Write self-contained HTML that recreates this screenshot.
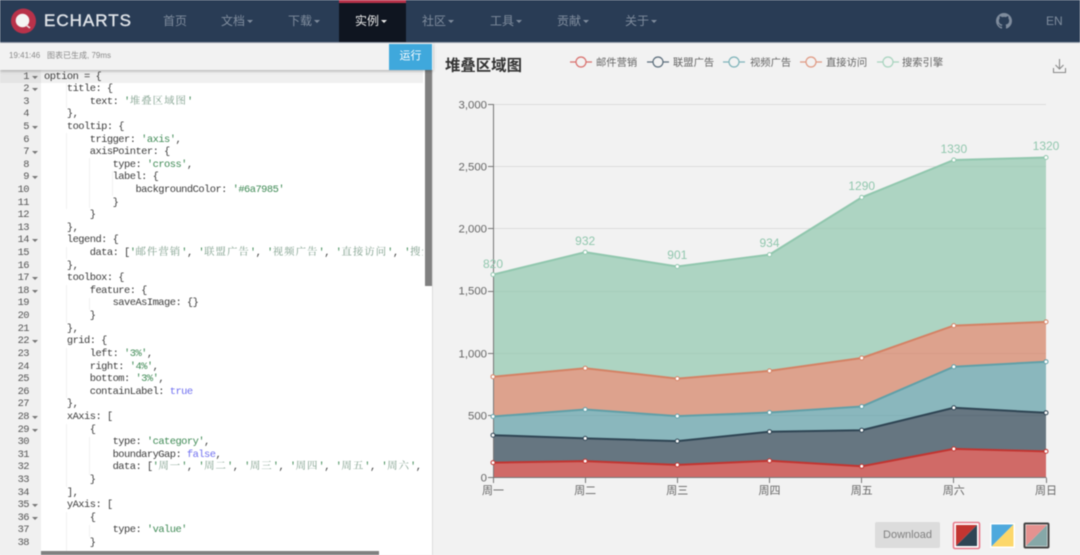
<!DOCTYPE html>
<html lang="zh"><head><meta charset="utf-8"><title>ECharts</title>
<style>
html,body{margin:0;padding:0;width:1080px;height:555px;overflow:hidden;background:#f2f2f2}
#r{position:relative;width:1080px;height:555px;overflow:hidden;filter:blur(.5px);font-family:"Liberation Sans","Noto Sans CJK SC",sans-serif}
#nav{position:absolute;left:0;top:0;width:1080px;height:42px;background:#293c55;border-bottom:1px solid #9aa3b0}
#nav span.n{position:absolute;top:13px;font-size:12px;line-height:16px;color:#7f8c9d;white-space:nowrap}
#nav span.n u{display:inline-block;width:0;height:0;border-left:3.5px solid transparent;border-right:3.5px solid transparent;border-top:3.5px solid currentColor;vertical-align:2px;margin-left:2px}
#act{position:absolute;left:339px;top:0;width:67px;height:42px;background:#0f1520}
#act:before{content:"";position:absolute;left:0;top:0;width:67px;height:3px;background:#b8324a}
#lg{position:absolute;left:44px;top:12px;font-size:17px;line-height:18px;font-weight:normal;color:#dfe3e8;letter-spacing:1px;-webkit-text-stroke:.4px #dfe3e8}
#bar{position:absolute;left:0;top:43px;width:433px;height:27px;background:#f2f2f2;box-shadow:0 1px 3px rgba(0,0,0,.3);z-index:3}
#bar span{position:absolute;top:7px;font-size:8px;line-height:12px;color:#8a8a8a;white-space:nowrap}
#run{position:absolute;left:389px;top:1px;width:43px;height:26px;background:#3fa8dc;color:#fff;font-size:11px;line-height:24px;text-align:center}
#ed{position:absolute;left:0;top:70px;width:432px;height:485px;background:#fff;overflow:hidden}
#gut{position:absolute;left:0;top:0;width:41px;height:485px;background:#f0f0f0}
#act1{position:absolute;left:0;top:0;width:41px;height:12.6px;background:#e4e4e4}
#act2{position:absolute;left:41px;top:0;width:382px;height:12.6px;background:#f0f0f0}
#code{position:absolute;left:0;top:0;width:423px;height:485px;overflow:hidden;padding-top:.5px;font-family:"Liberation Mono","Noto Serif CJK SC",monospace;font-size:10.4px;letter-spacing:-.52px;color:#3c3c3c}
.l{position:relative;height:12.62px;line-height:12.62px;white-space:pre;padding-left:44px}
.l b{position:absolute;left:0;width:29px;text-align:right;font-weight:normal;color:#555}
.l i{position:absolute;left:32px;top:5px;width:0;height:0;border-left:3px solid transparent;border-right:3px solid transparent;border-top:3px solid #777}
.s{color:#3f8a55}
.k{color:#6f6ff0}
.c{font-family:"Noto Serif CJK SC","Liberation Mono",serif;letter-spacing:1.05px;color:#7f9f8c;line-height:0}
.g{position:absolute;width:1px;background:#f2f2f2}
#vs{position:absolute;left:425px;top:0;width:7px;height:216px;background:#808080}
#hs{position:absolute;left:41px;top:481px;width:338px;height:4px;background:#808080}
#div{position:absolute;left:432px;top:43px;width:1px;height:512px;background:#dcdcdc}
#dl{position:absolute;left:875px;top:522px;width:65px;height:26px;background:#dcdcdc;border-radius:2px;color:#808080;font-size:11px;line-height:26px;text-align:center}
</style></head><body><div id="r">
<div id="nav">
<svg style="position:absolute;left:11px;top:8px" width="26" height="26" viewBox="0 0 26 26"><circle cx="12.5" cy="13" r="12.5" fill="#b8324a"/><circle cx="11.5" cy="12.5" r="6.8" fill="#f4f4f4"/><path d="M15 17l4 3" stroke="#e8d8dc" stroke-width="1.6" fill="none"/></svg>
<div id="lg">ECHARTS</div>
<div id="act"></div>
<span class="n" style="left:163px">首页</span>
<span class="n" style="left:221px">文档<u></u></span>
<span class="n" style="left:288px">下载<u></u></span>
<span class="n" style="left:355px;color:#e8e8e8">实例<u></u></span>
<span class="n" style="left:422px">社区<u></u></span>
<span class="n" style="left:490px">工具<u></u></span>
<span class="n" style="left:557px">贡献<u></u></span>
<span class="n" style="left:625px">关于<u></u></span>
<svg style="position:absolute;left:996px;top:13px" width="16" height="16" viewBox="0 0 16 16"><path fill="#7f8c9d" d="M8 0C3.58 0 0 3.58 0 8c0 3.54 2.29 6.53 5.47 7.59.4.07.55-.17.55-.38 0-.19-.01-.82-.01-1.49-2.01.37-2.53-.49-2.69-.94-.09-.23-.48-.94-.82-1.13-.28-.15-.68-.52-.01-.53.63-.01 1.08.58 1.23.82.72 1.21 1.87.87 2.33.66.07-.52.28-.87.51-1.07-1.78-.2-3.64-.89-3.64-3.95 0-.87.31-1.59.82-2.15-.08-.2-.36-1.02.08-2.12 0 0 .67-.21 2.2.82.64-.18 1.32-.27 2-.27s1.36.09 2 .27c1.53-1.04 2.2-.82 2.2-.82.44 1.1.16 1.92.08 2.12.51.56.82 1.27.82 2.15 0 3.07-1.87 3.75-3.65 3.95.29.25.54.73.54 1.48 0 1.07-.01 1.93-.01 2.2 0 .21.15.46.55.38A8.01 8.01 0 0016 8c0-4.42-3.58-8-8-8z"/></svg>
<span class="n" style="left:1046px;font-size:12px">EN</span>
</div>

<div id="bar"><span style="left:9px">19:41:46</span><span style="left:47px">图表已生成, 79ms</span><div id="run">运行</div></div>

<div id="ed">
<div id="gut"></div><div id="act1"></div><div id="act2"></div>
<div class="g" style="left:66px;top:13px;height:25px"></div>
<div class="g" style="left:66px;top:63px;height:76px"></div>
<div class="g" style="left:89px;top:88px;height:50px"></div>
<div class="g" style="left:112px;top:101px;height:25px"></div>
<div class="g" style="left:66px;top:177px;height:12px"></div>
<div class="g" style="left:66px;top:215px;height:38px"></div>
<div class="g" style="left:89px;top:228px;height:12px"></div>
<div class="g" style="left:66px;top:278px;height:50px"></div>
<div class="g" style="left:66px;top:354px;height:63px"></div>
<div class="g" style="left:89px;top:367px;height:38px"></div>
<div class="g" style="left:66px;top:442px;height:40px"></div>
<div class="g" style="left:89px;top:455px;height:12px"></div>
<div id="code">
<div class="l"><b>1</b><i></i>option = {</div>
<div class="l"><b>2</b><i></i>    title: {</div>
<div class="l"><b>3</b>        text: <span class="s">'</span><span class="c">堆叠区域图</span><span class="s">'</span></div>
<div class="l"><b>4</b>    },</div>
<div class="l"><b>5</b><i></i>    tooltip: {</div>
<div class="l"><b>6</b>        trigger: <span class="s">'axis'</span>,</div>
<div class="l"><b>7</b><i></i>        axisPointer: {</div>
<div class="l"><b>8</b>            type: <span class="s">'cross'</span>,</div>
<div class="l"><b>9</b><i></i>            label: {</div>
<div class="l"><b>10</b>                backgroundColor: <span class="s">'#6a7985'</span></div>
<div class="l"><b>11</b>            }</div>
<div class="l"><b>12</b>        }</div>
<div class="l"><b>13</b>    },</div>
<div class="l"><b>14</b><i></i>    legend: {</div>
<div class="l"><b>15</b>        data: [<span class="s">'</span><span class="c">邮件营销</span><span class="s">'</span>, <span class="s">'</span><span class="c">联盟广告</span><span class="s">'</span>, <span class="s">'</span><span class="c">视频广告</span><span class="s">'</span>, <span class="s">'</span><span class="c">直接访问</span><span class="s">'</span>, <span class="s">'</span><span class="c">搜索引擎</span><span class="s">'</span>]</div>
<div class="l"><b>16</b>    },</div>
<div class="l"><b>17</b><i></i>    toolbox: {</div>
<div class="l"><b>18</b><i></i>        feature: {</div>
<div class="l"><b>19</b>            saveAsImage: {}</div>
<div class="l"><b>20</b>        }</div>
<div class="l"><b>21</b>    },</div>
<div class="l"><b>22</b><i></i>    grid: {</div>
<div class="l"><b>23</b>        left: <span class="s">'3%'</span>,</div>
<div class="l"><b>24</b>        right: <span class="s">'4%'</span>,</div>
<div class="l"><b>25</b>        bottom: <span class="s">'3%'</span>,</div>
<div class="l"><b>26</b>        containLabel: <span class="k">true</span></div>
<div class="l"><b>27</b>    },</div>
<div class="l"><b>28</b><i></i>    xAxis: [</div>
<div class="l"><b>29</b><i></i>        {</div>
<div class="l"><b>30</b>            type: <span class="s">'category'</span>,</div>
<div class="l"><b>31</b>            boundaryGap: <span class="k">false</span>,</div>
<div class="l"><b>32</b>            data: [<span class="s">'</span><span class="c">周一</span><span class="s">'</span>, <span class="s">'</span><span class="c">周二</span><span class="s">'</span>, <span class="s">'</span><span class="c">周三</span><span class="s">'</span>, <span class="s">'</span><span class="c">周四</span><span class="s">'</span>, <span class="s">'</span><span class="c">周五</span><span class="s">'</span>, <span class="s">'</span><span class="c">周六</span><span class="s">'</span>,</div>
<div class="l"><b>33</b>        }</div>
<div class="l"><b>34</b>    ],</div>
<div class="l"><b>35</b><i></i>    yAxis: [</div>
<div class="l"><b>36</b><i></i>        {</div>
<div class="l"><b>37</b>            type: <span class="s">'value'</span></div>
<div class="l"><b>38</b>        }</div>
</div>
<div id="vs"></div><div id="hs"></div>
</div>
<div id="div"></div>

<svg style="position:absolute;left:0;top:0" width="1080" height="555" viewBox="0 0 1080 555" font-family="'Liberation Sans','Noto Sans CJK SC',sans-serif">
<rect x="433" y="43" width="647" height="512" fill="#f2f2f2"/>
<text x="445" y="70.5" font-size="15.4" font-weight="bold" fill="#333">堆叠区域图</text>
<g font-size="10.3" fill="#666">
<text x="596" y="66">邮件营销</text><text x="673" y="66">联盟广告</text><text x="750" y="66">视频广告</text><text x="826" y="66">直接访问</text><text x="902" y="66">搜索引擎</text>
</g>
<g fill="#f2f2f2" stroke-width="1.2">
<g stroke="#d9706d"><path d="M570 62h22"/><circle cx="581" cy="62" r="5"/></g>
<g stroke="#5c6e7c"><path d="M647 62h22"/><circle cx="658" cy="62" r="5"/></g>
<g stroke="#7fb4ba"><path d="M723 62h22"/><circle cx="734" cy="62" r="5"/></g>
<g stroke="#e09a83"><path d="M800 62h22"/><circle cx="811" cy="62" r="5"/></g>
<g stroke="#a8d4bf"><path d="M877 62h22"/><circle cx="888" cy="62" r="5"/></g>
</g>
<path d="M1059.5 59v9.5M1055.5 65l4 4 4-4M1053.5 68v4.5h12V68" fill="none" stroke="#8a8a8a" stroke-width="1.1"/>
<g stroke="#dcdcdc" stroke-width="1">
<path d="M493 104.5H1046M493 166.5H1046M493 228.5H1046M493 291.5H1046M493 353.5H1046M493 415.5H1046"/>
</g>
<g fill="none">
<path d="M493 462.6L585.2 461.1 677.3 464.9 769.5 460.8 861.7 466.3 953.8 448.9 1046 451.4V477.5H493Z" fill="#c23531" fill-opacity=".72"/>
<path d="M493 435.2L585.2 438.4 677.3 441.1 769.5 431.7 861.7 430.2 953.8 407.8 1046 412.8V451.4L953.8 448.9 861.7 466.3 769.5 460.8 677.3 464.9 585.2 461.1 493 462.6Z" fill="#2f4554" fill-opacity=".72"/>
<path d="M493 416.5L585.2 409.5 677.3 416.1 769.5 412.5 861.7 406.5 953.8 366.7 1046 361.7V412.8L953.8 407.8 861.7 430.2 769.5 431.7 677.3 441.1 585.2 438.4 493 435.2Z" fill="#61a0a8" fill-opacity=".72"/>
<path d="M493 376.7L585.2 368.2 677.3 378.6 769.5 370.9 861.7 358 953.8 325.6 1046 321.9V361.7L953.8 366.7 861.7 406.5 769.5 412.5 677.3 416.1 585.2 409.5 493 416.5Z" fill="#d48265" fill-opacity=".72"/>
<path d="M493 274.6L585.2 252.2 677.3 266.5 769.5 254.6 861.7 197.4 953.8 160 1046 157.5V321.9L953.8 325.6 861.7 358 769.5 370.9 677.3 378.6 585.2 368.2 493 376.7Z" fill="#91c7ae" fill-opacity=".72"/>
<g stroke-width="2">
<path stroke="#c23531" d="M493 462.6L585.2 461.1 677.3 464.9 769.5 460.8 861.7 466.3 953.8 448.9 1046 451.4"/>
<path stroke="#2f4554" d="M493 435.2L585.2 438.4 677.3 441.1 769.5 431.7 861.7 430.2 953.8 407.8 1046 412.8"/>
<path stroke="#61a0a8" d="M493 416.5L585.2 409.5 677.3 416.1 769.5 412.5 861.7 406.5 953.8 366.7 1046 361.7"/>
<path stroke="#d48265" d="M493 376.7L585.2 368.2 677.3 378.6 769.5 370.9 861.7 358 953.8 325.6 1046 321.9"/>
<path stroke="#91c7ae" d="M493 274.6L585.2 252.2 677.3 266.5 769.5 254.6 861.7 197.4 953.8 160 1046 157.5"/>
</g>
</g>
<g stroke="#777" stroke-width="1" fill="none">
<path d="M493.5 104V478M488 104.5H493M488 166.5H493M488 228.5H493M488 291.5H493M488 353.5H493M488 415.5H493M488 477.5H1046.5"/>
<path d="M493.5 478v5M585.5 478v5M677.5 478v5M769.5 478v5M861.5 478v5M953.5 478v5M1046.5 478v5"/>
</g>
<g fill="#fff" stroke-width="1">
<g stroke="#c23531"><circle cx="493" cy="462.6" r="2"/><circle cx="585.2" cy="461.1" r="2"/><circle cx="677.3" cy="464.9" r="2"/><circle cx="769.5" cy="460.8" r="2"/><circle cx="861.7" cy="466.3" r="2"/><circle cx="953.8" cy="448.9" r="2"/><circle cx="1046" cy="451.4" r="2"/></g>
<g stroke="#2f4554"><circle cx="493" cy="435.2" r="2"/><circle cx="585.2" cy="438.4" r="2"/><circle cx="677.3" cy="441.1" r="2"/><circle cx="769.5" cy="431.7" r="2"/><circle cx="861.7" cy="430.2" r="2"/><circle cx="953.8" cy="407.8" r="2"/><circle cx="1046" cy="412.8" r="2"/></g>
<g stroke="#61a0a8"><circle cx="493" cy="416.5" r="2"/><circle cx="585.2" cy="409.5" r="2"/><circle cx="677.3" cy="416.1" r="2"/><circle cx="769.5" cy="412.5" r="2"/><circle cx="861.7" cy="406.5" r="2"/><circle cx="953.8" cy="366.7" r="2"/><circle cx="1046" cy="361.7" r="2"/></g>
<g stroke="#d48265"><circle cx="493" cy="376.7" r="2"/><circle cx="585.2" cy="368.2" r="2"/><circle cx="677.3" cy="378.6" r="2"/><circle cx="769.5" cy="370.9" r="2"/><circle cx="861.7" cy="358" r="2"/><circle cx="953.8" cy="325.6" r="2"/><circle cx="1046" cy="321.9" r="2"/></g>
<g stroke="#91c7ae"><circle cx="493" cy="274.6" r="2"/><circle cx="585.2" cy="252.2" r="2"/><circle cx="677.3" cy="266.5" r="2"/><circle cx="769.5" cy="254.6" r="2"/><circle cx="861.7" cy="197.4" r="2"/><circle cx="953.8" cy="160" r="2"/><circle cx="1046" cy="157.5" r="2"/></g>
</g>
<g font-size="12" fill="#91c7ae" text-anchor="middle">
<text x="493" y="268">820</text><text x="585.2" y="245">932</text><text x="677.3" y="259">901</text><text x="769.5" y="247">934</text><text x="861.7" y="190">1290</text><text x="953.8" y="153">1330</text><text x="1046" y="150">1320</text>
</g>
<g font-size="11.4" fill="#666" text-anchor="end">
<text x="487" y="108.7">3,000</text><text x="487" y="170.7">2,500</text><text x="487" y="232.7">2,000</text><text x="487" y="294.7">1,500</text><text x="487" y="357.7">1,000</text><text x="487" y="419.7">500</text><text x="487" y="481.7">0</text>
</g>
<g font-size="11" fill="#666" text-anchor="middle">
<text x="493" y="494">周一</text><text x="585.2" y="494">周二</text><text x="677.3" y="494">周三</text><text x="769.5" y="494">周四</text><text x="861.7" y="494">周五</text><text x="953.8" y="494">周六</text><text x="1046" y="494">周日</text>
</g>
<rect x="953.5" y="522.5" width="26" height="26" rx="1.5" fill="#fff" stroke="#e87b8c" stroke-width="1.6"/>
<path d="M956 525h21L956 546Z" fill="#c23531"/><path d="M977 525v21H956Z" fill="#2f4554"/>
<rect x="990" y="523" width="25" height="25" fill="#fff"/>
<path d="M991.5 524.5h22l-22 22Z" fill="#4ea9dd"/><path d="M1013.5 524.5v22h-22Z" fill="#fcd76a"/>
<rect x="1024.5" y="523.5" width="24" height="24" rx="1" fill="#fff" stroke="#444" stroke-width="2"/>
<path d="M1026 525h21L1026 546Z" fill="#e59290"/><path d="M1047 525v21H1026Z" fill="#86a8a8"/>
</svg>
<div id="dl">Download</div>
</div></body></html>
